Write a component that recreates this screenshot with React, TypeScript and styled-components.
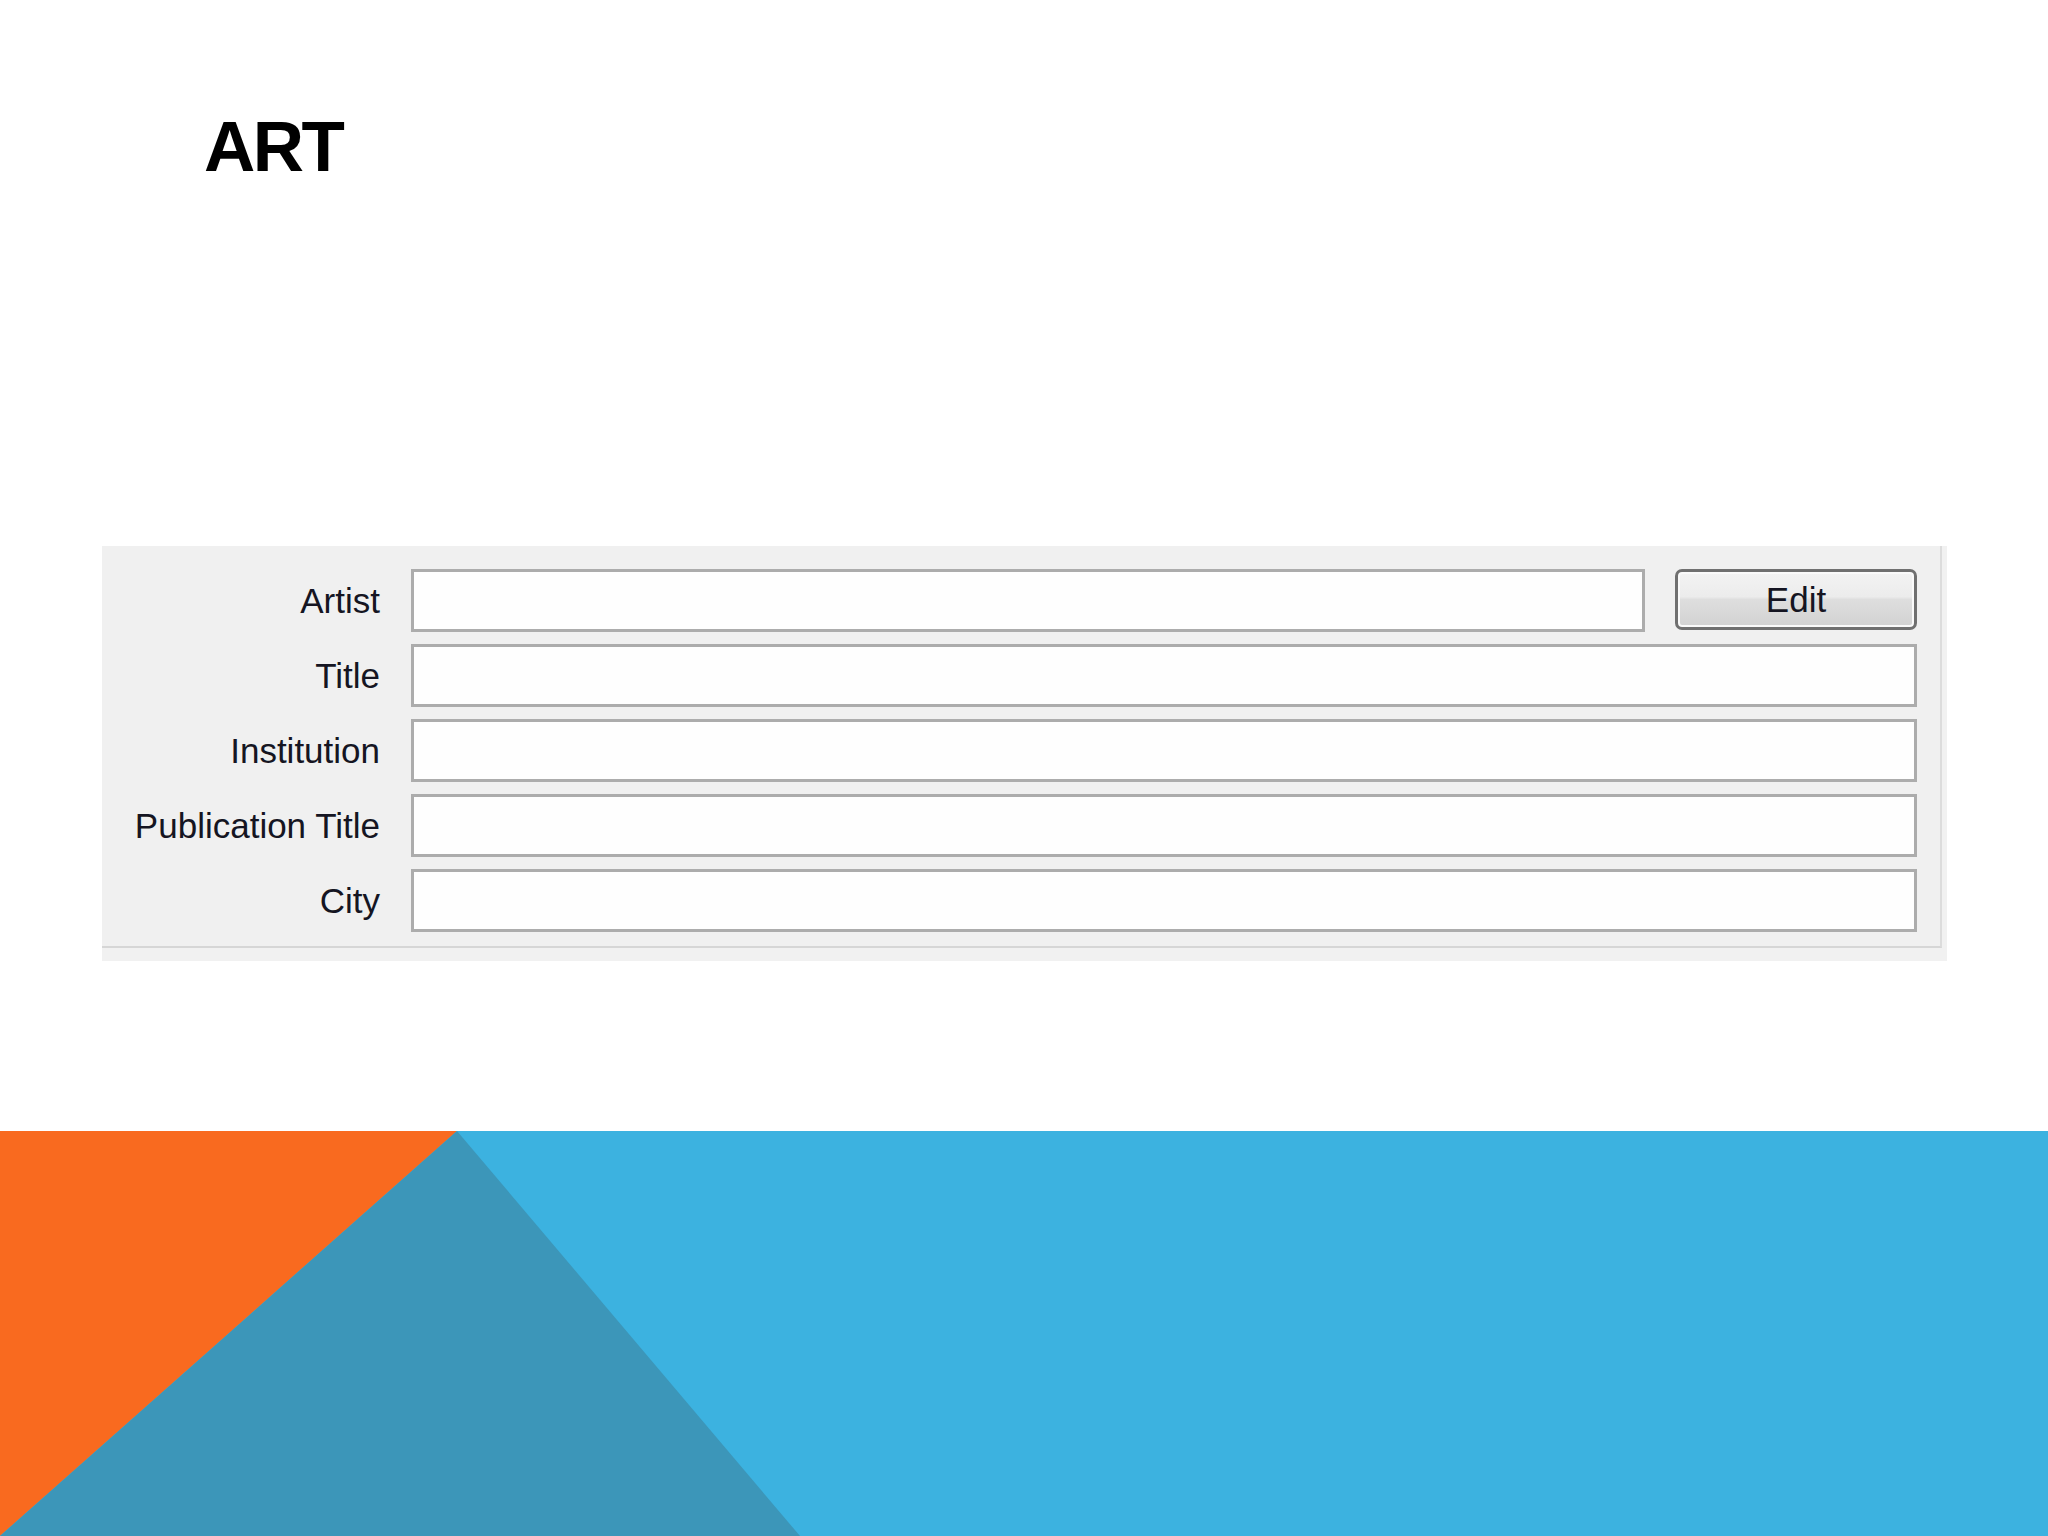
import React from 'react';
import styled, { createGlobalStyle } from 'styled-components';

const GlobalStyle = createGlobalStyle`
    html, body {
        margin: 0;
        padding: 0;
        background: #ffffff;
    }
    body {
        font-family: "Liberation Sans", Arial, sans-serif;
    }
`;

const Slide = styled.div`
    width: 2048px;
    height: 1536px;
    display: flex;
    flex-direction: column;
    overflow: hidden;
    background: #ffffff;
`;

const Heading = styled.h1`
    margin: 0;
    padding: 111px 0 0 204px;
    font-family: "Liberation Sans", Arial, sans-serif;
    font-weight: 700;
    font-size: 71px;
    line-height: 1;
    letter-spacing: -2.5px;
    color: #000000;
`;

const Frame = styled.div`
    margin: 364px 0 0 102px;
    width: 1845px;
    padding-bottom: 13px;
    background: #f1f1f1;
`;

const Panel = styled.div`
    width: 1840px;
    box-sizing: border-box;
    padding: 23px 23px 14px 0;
    background: #f0f0f0;
    border-right: 2px solid #dcdcdc;
    border-bottom: 2px solid #d6d6d6;
    display: grid;
    grid-template-columns: 278px 1fr;
    column-gap: 31px;
    row-gap: 12px;
`;

const Label = styled.label`
    display: flex;
    align-items: center;
    justify-content: flex-end;
    height: 63px;
    font-family: Tahoma, "Liberation Sans", Arial, sans-serif;
    font-size: 35px;
    color: #151522;
    white-space: nowrap;
`;

const FieldRow = styled.div`
    display: flex;
    gap: 30px;
`;

const TextBox = styled.input`
    flex: 1;
    min-width: 0;
    height: 63px;
    box-sizing: border-box;
    margin: 0;
    padding: 0 8px;
    border: 3px solid #acacac;
    background: #fefefe;
    font-family: Tahoma, "Liberation Sans", Arial, sans-serif;
    font-size: 35px;
    outline: none;
`;

const EditButton = styled.button`
    width: 242px;
    height: 61px;
    box-sizing: border-box;
    margin: 0;
    border: 3px solid #707070;
    border-radius: 7px;
    background: linear-gradient(#f3f3f3 0%, #ececec 45%, #dedede 50%, #d2d2d2 100%);
    box-shadow: inset 0 0 0 2px #fafafa;
    font-family: Tahoma, "Liberation Sans", Arial, sans-serif;
    font-size: 35px;
    color: #151522;
    cursor: pointer;
`;

const Band = styled.div`
    margin-top: auto;
    height: 405px;
    svg {
        display: block;
    }
`;

const fields = ['Title', 'Institution', 'Publication Title', 'City'];

const App: React.FC = () => {
    return (
        <>
            <GlobalStyle />
            <Slide>
                <Heading>ART</Heading>
                <Frame>
                    <Panel>
                        <Label>Artist</Label>
                        <FieldRow>
                            <TextBox readOnly />
                            <EditButton>Edit</EditButton>
                        </FieldRow>
                        {fields.map((f) => (
                            <React.Fragment key={f}>
                                <Label>{f}</Label>
                                <FieldRow>
                                    <TextBox readOnly />
                                </FieldRow>
                            </React.Fragment>
                        ))}
                    </Panel>
                </Frame>
                <Band>
                    {/* decorative corner shapes */}
                    <svg width="2048" height="405" viewBox="0 0 2048 405">
                        <rect x="0" y="0" width="2048" height="405" fill="#3cb2e0" />
                        <polygon points="0,0 457,0 0,405" fill="#f96a1f" />
                        <polygon points="457,0 800,405 0,405" fill="#3c96b9" />
                    </svg>
                </Band>
            </Slide>
        </>
    );
};

export default App;
